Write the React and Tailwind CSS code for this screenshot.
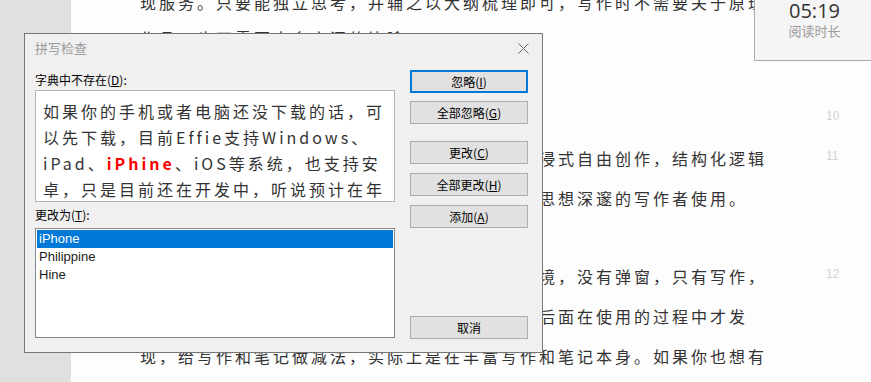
import React from "react";

const CJK = { fontFamily: '"Noto Sans CJK SC", "Noto Sans", sans-serif' };

function Acc({ label, k }) {
  return (
    <span>
      {label}
      {k ? (
        <>
          (<span className="underline underline-offset-[1px]">{k}</span>)
        </>
      ) : null}
    </span>
  );
}

function Btn({ label, k, primary, className = "" }) {
  return (
    <div
      className={
        "h-[23px] w-[118px] flex items-center justify-center bg-[#e1e1e1] text-[12px] text-black " +
        (primary ? "border-2 border-[#0078d7] " : "border border-[#adadad] ") +
        className
      }
    >
      <Acc label={label} k={k} />
    </div>
  );
}

function DocLine({ text, num, h = "h-[40px] leading-[40px]" }) {
  return (
    <div className={"flex items-center whitespace-nowrap shrink-0 " + h}>
      <div className="w-[686px] shrink-0 overflow-hidden text-[16px] tracking-[3px] text-[#333]">{text}</div>
      <div className="text-[12px] text-[#d2d2d2] -mt-[4px]" style={{ fontFamily: '"Liberation Sans", sans-serif' }}>
        {num}
      </div>
    </div>
  );
}

export default function App() {
  return (
    <div className="relative w-[871px] h-[382px] overflow-hidden flex bg-[#fdfdfd]" style={CJK}>
      <div className="w-[71px] shrink-0 bg-[#e0e0e0]" />
      <div className="flex-1 pl-[69px] -mt-[18px] flex flex-col">
        <DocLine h="h-[40px] leading-[40px]" text="现服务。只要能独立思考，并辅之以大纲梳理即可，写作时不需要关于原理" />
        <DocLine h="h-[32px] leading-[32px]" text="作品，也不需要太多高深的比喻。" />
        <div className="h-[44px] shrink-0" />
        <DocLine text="以下是我的一些使用体验。" num="10" />
        <DocLine text="这是一款面向写作者的极简写作工具，它提供沉浸式自由创作，结构化逻辑" num="11" />
        <DocLine text="大纲模式可以帮助你理清思路，也非常适合那些思想深邃的写作者使用。" />
        <div className="h-[38px] shrink-0" />
        <DocLine text="它为你提供了一个简洁干净、纯粹安静的写作环境，没有弹窗，只有写作，" num="12" />
        <DocLine text="刚开始我以为它只是功能太少，但用了一段时间后面在使用的过程中才发" />
        <DocLine text="现，给写作和笔记做减法，实际上是在丰富写作和笔记本身。如果你也想有" />
      </div>

      {/* reading time panel */}
      <div className="absolute top-0 left-[754px] w-[120px] h-[61px] bg-[#f5f5f5] border-l border-b border-[#a8a8a8] flex flex-col items-center">
        <div className="text-[20px] leading-[20px] mt-[1px] text-[#333]" style={{ fontFamily: '"Open Sans", "Noto Sans", sans-serif' }}>
          05:19
        </div>
        <div className="text-[13px] leading-[16px] mt-[2px] text-[#9a9a9a]">阅读时长</div>
      </div>

      {/* spell check dialog */}
      <div className="absolute left-[24px] top-[33px] w-[519px] h-[320px] bg-[#f0f0f0] border border-[#767676] flex flex-col">
        <div className="h-[28px] shrink-0 flex items-center justify-between pl-[10px] pr-[13px]">
          <span className="text-[13px] text-[#9c9c9c]">拼写检查</span>
          <svg width="11" height="11" viewBox="0 0 11 11">
            <path d="M0.5 0.5 L10.5 10.5 M10.5 0.5 L0.5 10.5" stroke="#6a6a6a" strokeWidth="1" fill="none" />
          </svg>
        </div>
        <div className="flex pl-[10px]">
          <div className="w-[360px] flex flex-col">
            <div className="mt-[10px] h-[16px] leading-[16px] text-[12px] text-black">
              <Acc label="字典中不存在" k="D" />:
            </div>
            <div className="mt-[2px] h-[112px] bg-white border border-[#b4b4b4] pl-[7px] pt-[7px] text-[16px] leading-[26px] tracking-[3px] text-[#333] whitespace-nowrap overflow-hidden">
              <div>如果你的手机或者电脑还没下载的话，可</div>
              <div>以先下载，目前Effie支持Windows、</div>
              <div>
                iPad、<span className="text-[#ff0000] font-bold">iPhine</span>、iOS等系统，也支持安
              </div>
              <div>卓，只是目前还在开发中，听说预计在年</div>
            </div>
            <div className="mt-[5px] h-[16px] leading-[16px] text-[12px] text-black">
              <Acc label="更改为" k="T" />:
            </div>
            <div
              className="mt-[5px] h-[110px] bg-white border border-[#828790] p-[1px] text-[13px] text-[#1a1a1a]"
              style={{ fontFamily: '"Liberation Sans", Arial, sans-serif' }}
            >
              <div className="h-[18px] leading-[18px] pl-[2px] bg-[#0078d7] text-white">iPhone</div>
              <div className="h-[18px] leading-[18px] pl-[2px]">Philippine</div>
              <div className="h-[18px] leading-[18px] pl-[2px]">Hine</div>
            </div>
          </div>
          <div className="ml-[15px] flex flex-col">
            <Btn label="忽略" k="I" primary className="mt-[8px]" />
            <Btn label="全部忽略" k="G" className="mt-[8px]" />
            <Btn label="更改" k="C" className="mt-[17px]" />
            <Btn label="全部更改" k="H" className="mt-[9px]" />
            <Btn label="添加" k="A" className="mt-[9px]" />
            <Btn label="取消" className="mt-[88px]" />
          </div>
        </div>
      </div>
    </div>
  );
}
